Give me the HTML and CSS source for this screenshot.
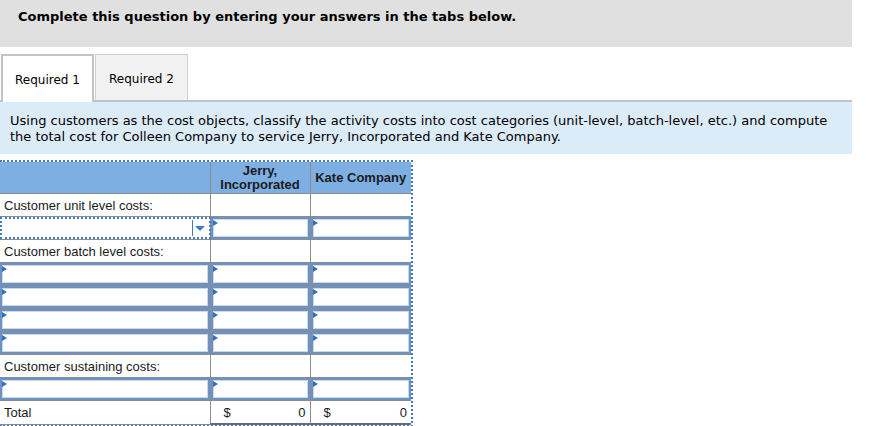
FILE: index.html
```html
<!DOCTYPE html>
<html>
<head>
<meta charset="utf-8">
<link rel="stylesheet" href="styles.css">
</head>
<body>
<div class="header">Complete this question by entering your answers in the tabs below.</div>
<div class="tabs">
  <div class="tab active">Required 1</div>
  <div class="tab">Required 2</div>
</div>
<div class="info">Using customers as the cost objects, classify the activity costs into cost categories (unit-level, batch-level, etc.) and compute the total cost for Colleen Company to service Jerry, Incorporated and Kate Company.</div>
<div class="tablewrap">
<table class="grid">
  <colgroup><col class="c1"><col class="c2"><col class="c3"></colgroup>
  <tr class="head"><th></th><th>Jerry,<br>Incorporated</th><th>Kate Company</th></tr>
  <tr class="lbl"><td>Customer unit level costs:</td><td></td><td></td></tr>
  <tr class="inp"><td class="sel"><div class="select"><span class="arrow"></span></div></td><td><div class="box"></div></td><td><div class="box"></div></td></tr>
  <tr class="lbl"><td>Customer batch level costs:</td><td></td><td></td></tr>
  <tr class="inp"><td><div class="box"></div></td><td><div class="box"></div></td><td><div class="box"></div></td></tr>
  <tr class="inp"><td><div class="box"></div></td><td><div class="box"></div></td><td><div class="box"></div></td></tr>
  <tr class="inp"><td><div class="box"></div></td><td><div class="box"></div></td><td><div class="box"></div></td></tr>
  <tr class="inp"><td><div class="box"></div></td><td><div class="box"></div></td><td><div class="box"></div></td></tr>
  <tr class="lbl"><td>Customer sustaining costs:</td><td></td><td></td></tr>
  <tr class="inp"><td><div class="box"></div></td><td><div class="box"></div></td><td><div class="box"></div></td></tr>
  <tr class="total"><td>Total</td><td class="amt"><span>$</span><span>0</span></td><td class="amt"><span>$</span><span>0</span></td></tr>
</table>
</div>
</body>
</html>
```
FILE: styles.css
```css
body {
  margin: 0;
  font-family: "DejaVu Sans", Verdana, sans-serif;
  color: #000;
  background: #fff;
}
.header {
  width: 834px;
  padding-left: 18px;
  padding-top: 9px;
  height: 38px;
  background: #e0e0e0;
  font-weight: bold;
  font-size: 13px;
  line-height: 16px;
}
.tabs {
  display: flex;
  margin-top: 7px;
  width: 852px;
  border-bottom: 2px solid #c4c4c4;
  padding-left: 1px;
  box-sizing: border-box;
  gap: 1px;
}
.tab {
  width: 93px;
  height: 46px;
  box-sizing: border-box;
  border: 1px solid #cfcfcf;
  border-bottom: none;
  background: #f2f2f2;
  font-size: 12px;
  display: flex;
  align-items: center;
  justify-content: center;
  padding-top: 2px;
}
.tab.active {
  background: #fff;
  border-left: 2px solid #c4c4c4;
  border-right: 2px solid #c4c4c4;
  border-top: 2px solid #c4c4c4;
  margin-bottom: -2px;
  height: 48px;
}
.info {
  width: 852px;
  box-sizing: border-box;
  background: #dcebf8;
  padding: 11px 10px 9px 10px;
  font-size: 13px;
  line-height: 16px;
  height: 52px;
}
.tablewrap {
  margin-top: 6px;
  width: 413px;
  border-top: 2px dotted #3d7cc9;
  border-right: 2px dotted #3d7cc9;
  border-bottom: 2px dotted #3d7cc9;
  box-sizing: border-box;
}
.grid {
  border-collapse: collapse;
  font-family: "Liberation Sans", Arial, sans-serif;
  font-size: 13px;
  table-layout: fixed;
  width: 411px;
}
.c1 { width: 210px; }
.c2 { width: 100px; }
.c3 { width: 101px; }
.grid td, .grid th {
  border: 1px solid #8c8c8c;
  padding: 0;
}
.grid tr:first-child th { border-top: none; }
.grid td:first-child, .grid th:first-child { border-left: none; }
.grid td:last-child, .grid th:last-child { border-right: none; }
.head th {
  background: #7eafe3;
  height: 31px;
  font-weight: bold;
  line-height: 14px;
  color: #1a1a1a;
  vertical-align: middle;
}
.lbl td {
  height: 22px;
  padding-left: 4px;
  color: #1a1a1a;
}
.inp td {
  height: 22px;
  padding: 0;
}
.box {
  height: 22px;
  box-sizing: border-box;
  border: 2px solid #6d91c1;
  box-shadow: inset 0 0 0 1px #c9daf0;
  position: relative;
}
.box::before {
  content: "";
  position: absolute;
  left: 0;
  top: 1px;
  border-left: 5px solid #2f6fc4;
  border-top: 3.5px solid transparent;
  border-bottom: 3.5px solid transparent;
}
.select {
  height: 22px;
  box-sizing: border-box;
  border: 2px dotted #3d7cc9;
  position: relative;
  margin-right: -1px;
}
.select::after {
  content: "";
  position: absolute;
  right: 16px;
  top: 1px;
  bottom: 1px;
  width: 1px;
  background: #3d7cc9;
}
.arrow {
  position: absolute;
  right: 4px;
  top: 7px;
  border-top: 5px solid #3d7cc9;
  border-left: 5px solid transparent;
  border-right: 5px solid transparent;
}
.total td {
  height: 22px;
  padding-left: 4px;
  color: #1a1a1a;
}
.total td.amt {
  padding: 0 4px 0 13px;
  border-bottom: 2px solid #6b6b6b;
}
.amt span:first-child { float: left; }
.amt span:last-child { float: right; }
```
